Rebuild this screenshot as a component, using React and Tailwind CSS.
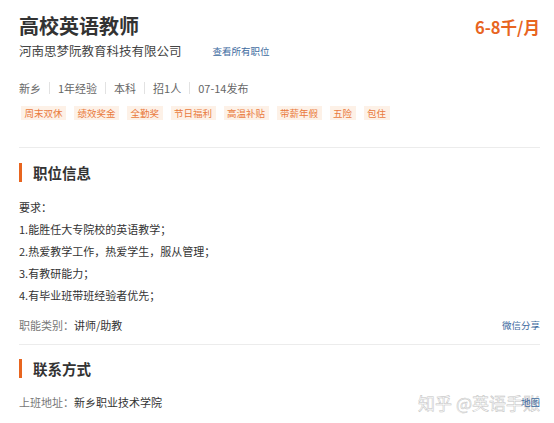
export default function App() {
  const tags = ["周末双休", "绩效奖金", "全勤奖", "节日福利", "高温补贴", "带薪年假", "五险", "包住"];
  const meta = ["新乡", "1年经验", "本科", "招1人", "07-14发布"];
  const reqs = [
    "要求：",
    "1.能胜任大专院校的英语教学；",
    "2.热爱教学工作，热爱学生，服从管理；",
    "3.有教研能力；",
    "4.有毕业班带班经验者优先；",
  ];
  return (
    <div className="relative w-[554px] h-[423px] overflow-hidden bg-white text-[#333] font-['Noto_Sans_CJK_SC','Noto_Sans',sans-serif]">
      <div className="pl-[19px] pr-[14px]">
        <div className="flex justify-between">
          <div>
            <div className="pt-[13px] text-[20px] leading-[26px] font-bold text-[#333]">高校英语教师</div>
            <div className="mt-[3px] flex items-center">
              <span className="text-[12.5px] leading-[18px] text-[#444]">河南思梦阮教育科技有限公司</span>
              <span className="ml-[31px] text-[9.5px] leading-[18px] text-[#3d6a9e]">查看所有职位</span>
            </div>
          </div>
          <div className="pt-[15px] text-[16.5px] leading-[24px] font-bold text-[#e8651f]">6-8千/月</div>
        </div>

        <div className="mt-[19px] flex items-center text-[11px] leading-[18px] text-[#666]">
          {meta.map((m, i) => (
            <div key={m} className="flex items-center">
              {i > 0 && <span className="mx-[8px] h-[12px] w-px bg-[#e2e2e2]" />}
              <span>{m}</span>
            </div>
          ))}
        </div>

        <div className="mt-[9px] flex gap-[8px] pl-[2px]">
          {tags.map((t) => (
            <span key={t} className="h-[14px] px-[3.5px] bg-[#fdf1e7] text-[9.5px] leading-[14px] text-[#e97a3c]">{t}</span>
          ))}
        </div>

        <div className="mt-[27px] h-px bg-[#ececec]" />

        <div className="mt-[15px] flex items-center">
          <span className="h-[19px] w-[3px] bg-[#e8651f]" />
          <span className="ml-[11px] text-[14.5px] leading-[19px] font-bold text-[#333]">职位信息</span>
        </div>

        <div className="mt-[14px] text-[11px] leading-[22px] text-[#333]">
          {reqs.map((r) => (
            <div key={r}>{r}</div>
          ))}
        </div>

        <div className="mt-[10px] flex justify-between items-center text-[11px] leading-[18px]">
          <div>
            <span className="text-[#777]">职能类别：</span>
            <span className="text-[#333]">讲师/助教</span>
          </div>
          <span className="text-[9.5px] text-[#3d6a9e]">微信分享</span>
        </div>

        <div className="mt-[10px] h-px bg-[#ececec]" />

        <div className="mt-[14px] flex items-center">
          <span className="h-[19px] w-[3px] bg-[#e8651f]" />
          <span className="ml-[11px] text-[14.5px] leading-[19px] font-bold text-[#333]">联系方式</span>
        </div>

        <div className="mt-[15px] flex justify-between items-center text-[11px] leading-[18px]">
          <div>
            <span className="text-[#777]">上班地址：</span>
            <span className="text-[#333]">新乡职业技术学院</span>
          </div>
          <span className="relative z-10 text-[9.5px] text-[#3d6a9e]">地图</span>
        </div>
      </div>

      <div className="absolute right-[14px] top-[391px] text-[17px] leading-[24px] text-white [-webkit-text-stroke:0.5px_#c2c2c2] font-['Noto_Sans_CJK_SC',sans-serif]">
        知乎 @英语手账
      </div>
    </div>
  );
}
